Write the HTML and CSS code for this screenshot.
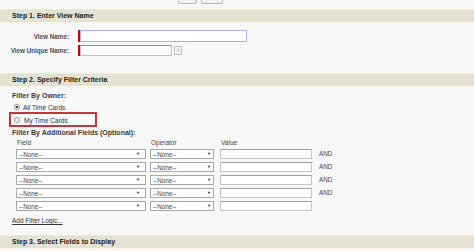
FILE: index.html
```html
<!DOCTYPE html>
<html lang="en">
<head>
    <meta charset="UTF-8">
    <meta name="viewport" content="width=device-width, initial-scale=1.0">
    <title>New View</title>
    <link rel="stylesheet" href="styles.css">
</head>
<body>

    <div class="topbar">
        <span class="btn"></span>
        <span class="btn wide"></span>
    </div>

    <div class="step">Step 1. Enter View Name</div>
    <div class="step-body first">
        <div class="field-row">
            <label class="label" for="viewName">View Name:</label>
            <span class="required"><input type="text" id="viewName" class="text focus"></span>
        </div>
        <div class="field-row">
            <label class="label" for="viewUnique">View Unique Name:</label>
            <span class="required"><input type="text" id="viewUnique" class="text short"></span>
            <span class="info">i</span>
        </div>
    </div>

    <div class="step">Step 2. Specify Filter Criteria</div>
    <div class="step-body second">
        <div class="group-title">Filter By Owner:</div>
        <label class="radio-row"><input type="radio" name="owner" checked> All Time Cards</label>
        <div class="highlight">
            <label class="radio-row"><input type="radio" name="owner"> My Time Cards</label>
        </div>
        <div class="group-title extra">Filter By Additional Fields (Optional):</div>

        <div class="filters">
            <div class="col-head">Field</div>
            <div class="col-head">Operator</div>
            <div class="col-head">Value</div>
            <div></div>
        </div>
        <div id="filterRows"></div>

        <a href="#" class="filter-logic">Add Filter Logic...</a>
    </div>

    <div class="step">Step 3. Select Fields to Display</div>

    <script>
        const filterRows = document.getElementById('filterRows');

        for (let i = 0; i < 5; i++) {
            const row = document.createElement('div');
            row.className = 'filters row';
            row.innerHTML =
                '<span class="pick field"><select><option>--None--</option></select></span>' +
                '<span class="pick op"><select><option>--None--</option></select></span>' +
                '<input type="text" class="value">' +
                (i < 4 ? '<span class="and">AND</span>' : '<span></span>');
            filterRows.appendChild(row);
        }
    </script>

</body>
</html>
```

FILE: styles.css
```css
body {
    margin: 0;
    background-color: #f8f8f8;
    font-family: "Liberation Sans", Arial, sans-serif;
    font-size: 7px;
    color: #333;
}

.topbar {
    height: 5px;
    overflow: hidden;
    display: flex;
    gap: 4px;
    padding-left: 178px;
}

.topbar .btn {
    width: 19px;
    height: 12px;
    margin-top: -8px;
    box-sizing: border-box;
    border: 1px solid #b8b8b8;
    border-radius: 2px;
    background-color: #f2f2f2;
}

.topbar .btn.wide {
    width: 22px;
}

.step {
    margin-top: 4px;
    height: 12px;
    line-height: 12px;
    padding-left: 12px;
    background-color: #e4e3d1;
    border-top: 1px solid #eceadc;
    border-bottom: 2px solid #fbf7ee;
    font-weight: bold;
    color: #222;
}

.step-body.first {
    padding-top: 6px;
    padding-bottom: 10px;
}

.step-body.second {
    padding-top: 4px;
    padding-bottom: 6px;
}

.field-row {
    display: flex;
    align-items: center;
    margin-bottom: 3px;
}

.label {
    width: 69px;
    margin-right: 9px;
    text-align: right;
    font-weight: bold;
    font-size: 6.3px;
    color: #4a4a56;
}

.required {
    display: flex;
    border-left: 2px solid #c00;
}

.text {
    margin: 0;
    padding: 0 2px;
    height: 12px;
    width: 167px;
    box-sizing: border-box;
    border: 1px solid #bdbdbd;
    border-top-color: #8f8f8f;
    background-color: white;
    font-size: 7px;
}

.text.focus {
    border-color: #a7b3de;
}

.text.short {
    width: 92px;
    height: 11px;
}

.info {
    margin-left: 2px;
    width: 8px;
    height: 9px;
    box-sizing: border-box;
    border: 1px solid #bcbcbc;
    border-radius: 1px;
    background-color: #f4f4f4;
    font-size: 5px;
    line-height: 7px;
    text-align: center;
    color: #5a6f9a;
}

.group-title {
    padding-left: 12px;
    line-height: 8px;
    font-weight: bold;
    color: #3a3a3a;
}

.group-title.extra {
    margin-top: 2px;
}

.radio-row {
    display: flex;
    align-items: center;
    height: 8px;
    margin-top: 3px;
    padding-left: 14px;
    font-size: 6.5px;
    color: #333;
}

.radio-row input {
    appearance: none;
    margin: 0 3px 0 0;
    width: 6px;
    height: 6px;
    border: 1px solid #9a9a9a;
    border-radius: 50%;
    background-color: #f4f4f4;
    box-sizing: border-box;
}

.radio-row input:checked {
    background: radial-gradient(circle, #444 0 1.3px, #f4f4f4 1.6px);
}

.highlight {
    margin: 1px 0 0 9px;
    width: 84px;
    height: 11px;
    border: 2px solid #c2363f;
}

.highlight .radio-row {
    margin-top: 2px;
    padding-left: 3px;
}

.highlight .radio-row input {
    margin-right: 4px;
}

.filters {
    display: grid;
    grid-template-columns: 134px 70px 99px auto;
    padding-left: 16px;
    margin-top: 2px;
    line-height: 8px;
    font-size: 6.5px;
}

.col-head {
    padding-left: 1px;
    color: #444;
}

.filters.row {
    height: 10px;
    margin-top: 3px;
    align-items: center;
}

#filterRows .filters.row:first-child {
    margin-top: 2px;
}

.pick {
    position: relative;
    display: block;
}

.pick select {
    appearance: none;
    display: block;
    margin: 0;
    padding: 0 0 0 2px;
    width: 130px;
    height: 10px;
    box-sizing: border-box;
    border: 1px solid #a9a9a9;
    border-radius: 0;
    background-color: white;
    font-family: "Liberation Sans", Arial, sans-serif;
    font-size: 6.3px;
    color: #444;
}

.pick.op select {
    width: 64px;
}

.pick::after {
    content: "\25BC";
    position: absolute;
    top: 2px;
    right: 10px;
    font-size: 4px;
    line-height: 5px;
    color: #222;
}

.pick.field::after {
    right: 10px;
}

.pick.op::after {
    right: 9px;
}

.value {
    margin: 0;
    width: 92px;
    height: 10px;
    box-sizing: border-box;
    border: 1px solid #c4c4c4;
    border-top-color: #a0a0a0;
    background-color: white;
}

.and {
    color: #444;
    font-size: 6.3px;
}

.filter-logic {
    display: block;
    margin-top: 6px;
    padding-left: 12px;
    line-height: 8px;
    font-size: 6.5px;
    color: #333;
}

.step-body.second + .step {
    margin-top: 4px;
}
```
